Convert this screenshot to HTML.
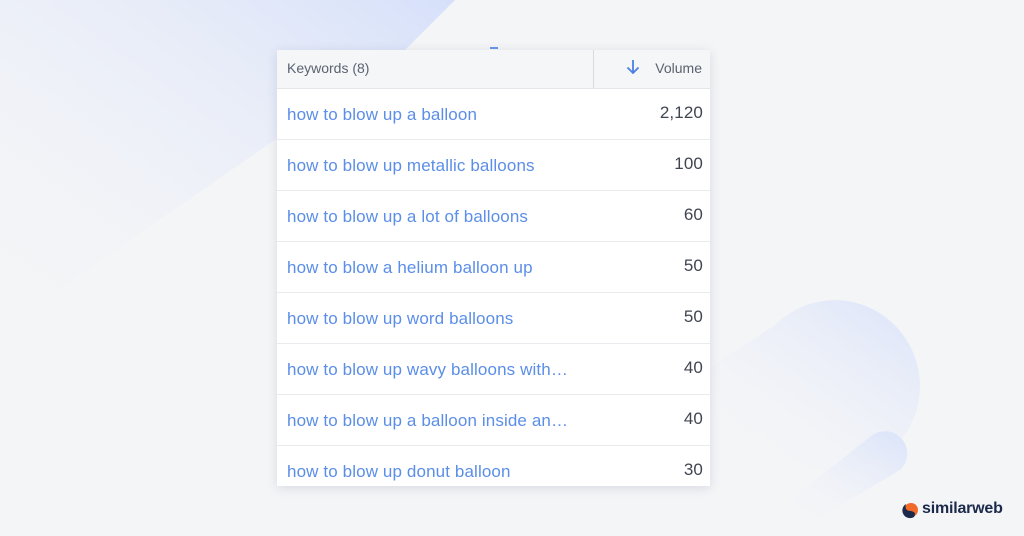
<!DOCTYPE html>
<html><head><style>
body{margin:0;width:1024px;height:536px;overflow:hidden;background:#f4f5f7;font-family:"Liberation Sans",Arial,sans-serif;position:relative}
.tbl{position:absolute;left:277px;top:50px;width:433px;background:#fff;box-shadow:0 2px 10px rgba(60,70,110,.15)}
.hd{height:38px;background:#f5f6f8;border-bottom:1px solid #e4e6ea;position:relative;font-size:14px;color:#5b6270}
.hd .k{position:absolute;left:10px;top:10px}
.hd .sep{position:absolute;left:316px;top:0;width:1px;height:38px;background:#d8dbe0}
.hd .v{position:absolute;right:8px;top:10px}
.row{height:50px;border-bottom:1px solid #e8eaee;position:relative;font-size:17px;letter-spacing:0.12px}
.row:last-child{border-bottom:none;height:40px}
.row .a{position:absolute;left:10px;top:16px;color:#5b8ee8}
.row .n{position:absolute;right:7px;top:14px;color:#3f4551}
</style></head><body>
<svg width="1024" height="536" style="position:absolute;left:0;top:0">
<defs>
<linearGradient id="g1" x1="1" y1="0" x2="0" y2="1"><stop offset="0" stop-color="#d6e0fa"/><stop offset="1" stop-color="#f4f5f7" stop-opacity="0"/></linearGradient>
<linearGradient id="g2" x1="1" y1="0" x2="0" y2="1"><stop offset="0" stop-color="#dae3fa"/><stop offset="0.8" stop-color="#f4f5f7" stop-opacity="0"/></linearGradient>
</defs>
<polygon points="0,0 455,0 405,50 0,330" fill="url(#g1)"/>
<path d="M835 300 A86 86 0 1 1 760 430 L700 480 L660 400 L775 325 A86 86 0 0 1 835 300Z" fill="url(#g2)"/>
<path d="M870 437 A22 22 0 0 1 900 470 L790 536 L745 536 Z" fill="url(#g2)"/>
<rect x="490" y="47" width="8" height="2" fill="#6a96ec"/>
<circle cx="911" cy="510" r="7" fill="#f06a2a"/>
<path d="M906 504 Q904 511 911 511 Q917 512 914 517 A7 7 0 0 1 906 504Z" fill="#1b2a4a"/>
</svg>
<div style="position:absolute;left:922px;top:500px;font-size:16px;font-weight:bold;color:#1b2a4a;letter-spacing:-0.2px">similarweb</div>
<div class="tbl">
<div class="hd"><span class="k">Keywords (8)</span><div class="sep"></div>
<svg width="14" height="16" style="position:absolute;left:349px;top:9px"><path d="M7 1 V14 M1.5 8.5 L7 14 L12.5 8.5" stroke="#4b7fe6" stroke-width="1.8" fill="none"/></svg>
<span class="v">Volume</span></div>
<div class="row"><span class="a">how to blow up a balloon</span><span class="n">2,120</span></div>
<div class="row"><span class="a">how to blow up metallic balloons</span><span class="n">100</span></div>
<div class="row"><span class="a">how to blow up a lot of balloons</span><span class="n">60</span></div>
<div class="row"><span class="a">how to blow a helium balloon up</span><span class="n">50</span></div>
<div class="row"><span class="a">how to blow up word balloons</span><span class="n">50</span></div>
<div class="row"><span class="a">how to blow up wavy balloons with…</span><span class="n">40</span></div>
<div class="row"><span class="a">how to blow up a balloon inside an…</span><span class="n">40</span></div>
<div class="row"><span class="a">how to blow up donut balloon</span><span class="n">30</span></div>
</div>
</body></html>
